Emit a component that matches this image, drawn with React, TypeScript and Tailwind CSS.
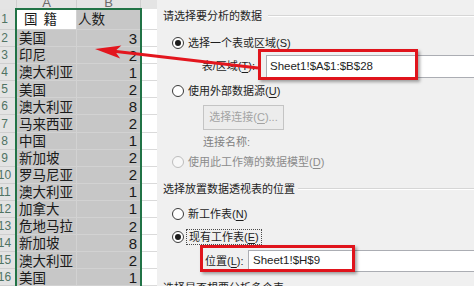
const rows: [string, number][] = [
  ["美国", 3],
  ["印尼", 2],
  ["澳大利亚", 1],
  ["美国", 2],
  ["澳大利亚", 8],
  ["马来西亚", 2],
  ["中国", 1],
  ["新加坡", 2],
  ["罗马尼亚", 2],
  ["澳大利亚", 1],
  ["加拿大", 1],
  ["危地马拉", 2],
  ["新加坡", 8],
  ["澳大利亚", 2],
  ["美国", 1],
];

const font = "font-['Liberation_Sans','Noto_Sans_CJK_SC',sans-serif]";

function Radio({ checked, disabled }: { checked?: boolean; disabled?: boolean }) {
  return (
    <span
      className={`flex h-[12px] w-[12px] shrink-0 items-center justify-center rounded-full border ${
        disabled ? "border-[#bdbdbd] bg-[#f7f7f7]" : "border-[#3a3a3a] bg-white"
      }`}
    >
      {checked ? <span className="h-[6px] w-[6px] rounded-full bg-[#1c1c1c]" /> : null}
    </span>
  );
}

function Key({ k }: { k: string }) {
  return (
    <>
      (<span className="underline underline-offset-2">{k}</span>)
    </>
  );
}

function SheetRow({ num, a, b, tall }: { num: number; a: string; b: string | number; tall?: boolean }) {
  const h = tall ? "h-[21px]" : "h-[17.1px]";
  return (
    <div className={`flex ${h} leading-none`}>
      <div className="flex w-[25px] items-center justify-center border-b border-[#cfcfcf] bg-[#e3e3e3] text-[12px] text-[#4f7363]">
        {num}
      </div>
      <div
        className={`flex w-[60px] items-center border-r border-b border-[#d2d2d2] text-[13.5px] text-[#1a1a1a] ${
          tall ? "bg-white pl-[7px] tracking-[6px]" : "bg-[#c7c7c7] pl-[2px]"
        } font-['Noto_Sans_CJK_SC',sans-serif]`}
      >
        {a}
      </div>
      <div
        className={`flex w-[64px] items-center border-r border-b border-[#d2d2d2] bg-[#c7c7c7] text-[#1a1a1a] ${
          tall
            ? "pl-[1px] text-[13.5px] font-['Noto_Sans_CJK_SC',sans-serif]"
            : "justify-end pr-[3px] text-[15px] font-['Liberation_Sans',sans-serif]"
        }`}
      >
        {b}
      </div>
      <div className="w-[16px] border-b border-[#dadada] bg-white" />
    </div>
  );
}

export default function App() {
  return (
    <div className={`relative flex h-[286px] w-[474px] overflow-hidden bg-white ${font}`}>
      {/* spreadsheet */}
      <div className="relative w-[157px] shrink-0 overflow-hidden bg-white">
        <div className="-ml-[8px] flex flex-col">
          <div className="flex h-[9px] overflow-hidden bg-[#e4e4e4] text-[13px] leading-none text-[#6a6a6a]">
            <div className="w-[25px] border-r border-[#cfcfcf]" />
            <div className="flex w-[60px] justify-center border-r border-[#cfcfcf]">
              <span className="-mt-[4px]">A</span>
            </div>
            <div className="flex w-[64px] justify-center border-r border-[#cfcfcf]">
              <span className="-mt-[4px]">B</span>
            </div>
            <div className="w-[16px]" />
          </div>
          <SheetRow num={1} a="国籍" b="人数" tall />
          {rows.map(([a, b], i) => (
            <SheetRow key={i} num={i + 2} a={a} b={b} />
          ))}
        </div>
        {/* selection border */}
        <div className="pointer-events-none absolute top-[8px] left-[15px] h-[300px] w-[127px] border-2 border-[#217346]" />
      </div>

      {/* dialog */}
      <div className="flex h-[286px] flex-1 flex-col overflow-hidden bg-[#f0f0f0] pl-[6px] text-[11px] text-[#1e1e1e]">
        <div className="mt-[8px] flex h-[16px] shrink-0 items-center">
          <span>请选择要分析的数据</span>
          <div className="ml-[6px] h-[2px] flex-1 border-t border-b border-t-[#d6d6d6] border-b-white" />
        </div>

        <div className="mt-[11px] ml-[9px] flex h-[16px] shrink-0 items-center gap-[4px]">
          <Radio checked />
          <span>
            选择一个表或区域<Key k="S" />
          </span>
        </div>

        <div className="mt-[4px] flex h-[23px] shrink-0 items-center">
          <div className="w-[103px] pr-[11px] text-right">
            表/区域<Key k="T" />:
          </div>
          <div className="-mr-[4px] flex h-[23px] flex-1 items-center border border-[#abadb3] bg-white pl-[3px] text-[11.5px] font-['Liberation_Sans',sans-serif]">
            Sheet1!$A$1:$B$28
          </div>
        </div>

        <div className="mt-[5px] ml-[9px] flex h-[16px] shrink-0 items-center gap-[4px]">
          <Radio />
          <span>
            使用外部数据源<Key k="U" />
          </span>
        </div>

        <div className="mt-[6px] ml-[40px] flex h-[25px] w-[81px] shrink-0 items-center justify-center border border-[#c4c4c4] bg-[#ececec] text-[#a3a3a3]">
          选择连接<Key k="C" />...
        </div>

        <div className="mt-[5px] ml-[40px] flex h-[14px] shrink-0 items-center text-[#808080]">连接名称:</div>

        <div className="mt-[5px] ml-[9px] flex h-[16px] shrink-0 items-center gap-[4px] text-[#8c8c8c]">
          <Radio disabled />
          <span>
            使用此工作簿的数据模型<Key k="D" />
          </span>
        </div>

        <div className="mt-[11px] flex h-[16px] shrink-0 items-center">
          <span>选择放置数据透视表的位置</span>
          <div className="ml-[3px] h-[2px] flex-1 border-t border-b border-t-[#d6d6d6] border-b-white" />
        </div>

        <div className="mt-[9px] ml-[9px] flex h-[16px] shrink-0 items-center gap-[4px]">
          <Radio />
          <span>
            新工作表<Key k="N" />
          </span>
        </div>

        <div className="mt-[7px] ml-[9px] flex h-[16px] shrink-0 items-center gap-[2px]">
          <Radio checked />
          <span className="flex h-[16px] items-center border border-dotted border-[#4a4a4a] px-[2px]">
            现有工作表<Key k="E" />
          </span>
        </div>

        <div className="mt-[5px] flex h-[22px] shrink-0 items-center">
          <div className="w-[85px] pl-[42px]">
            位置<Key k="L" />:
          </div>
          <div className="-mr-[4px] flex h-[22px] flex-1 items-center border border-[#abadb3] bg-white pl-[4px] text-[11.5px] font-['Liberation_Sans',sans-serif]">
            Sheet1!$H$9
          </div>
        </div>

        <div className="mt-[9px] h-[15px] shrink-0 leading-[15px]">选择是否想要分析多个表</div>
      </div>

      {/* red annotations */}
      <div className="pointer-events-none absolute top-[49px] left-[258px] h-[31px] w-[160px] border-[3px] border-[#e0141c] shadow-[2px_2px_3px_rgba(0,0,0,0.35)]" />
      <div className="pointer-events-none absolute top-[245px] left-[200px] h-[27px] w-[155px] border-[3px] border-[#e0141c] shadow-[2px_2px_3px_rgba(0,0,0,0.35)]" />
      <svg className="pointer-events-none absolute inset-0" width="474" height="286" viewBox="0 0 474 286">
        <line x1="112" y1="51" x2="258" y2="68" stroke="#e3161e" strokeWidth="3" />
        <path d="M95 49 L121.4 45.5 L115 51.3 L120.2 58.5 Z" fill="#e3161e" />
      </svg>
    </div>
  );
}
